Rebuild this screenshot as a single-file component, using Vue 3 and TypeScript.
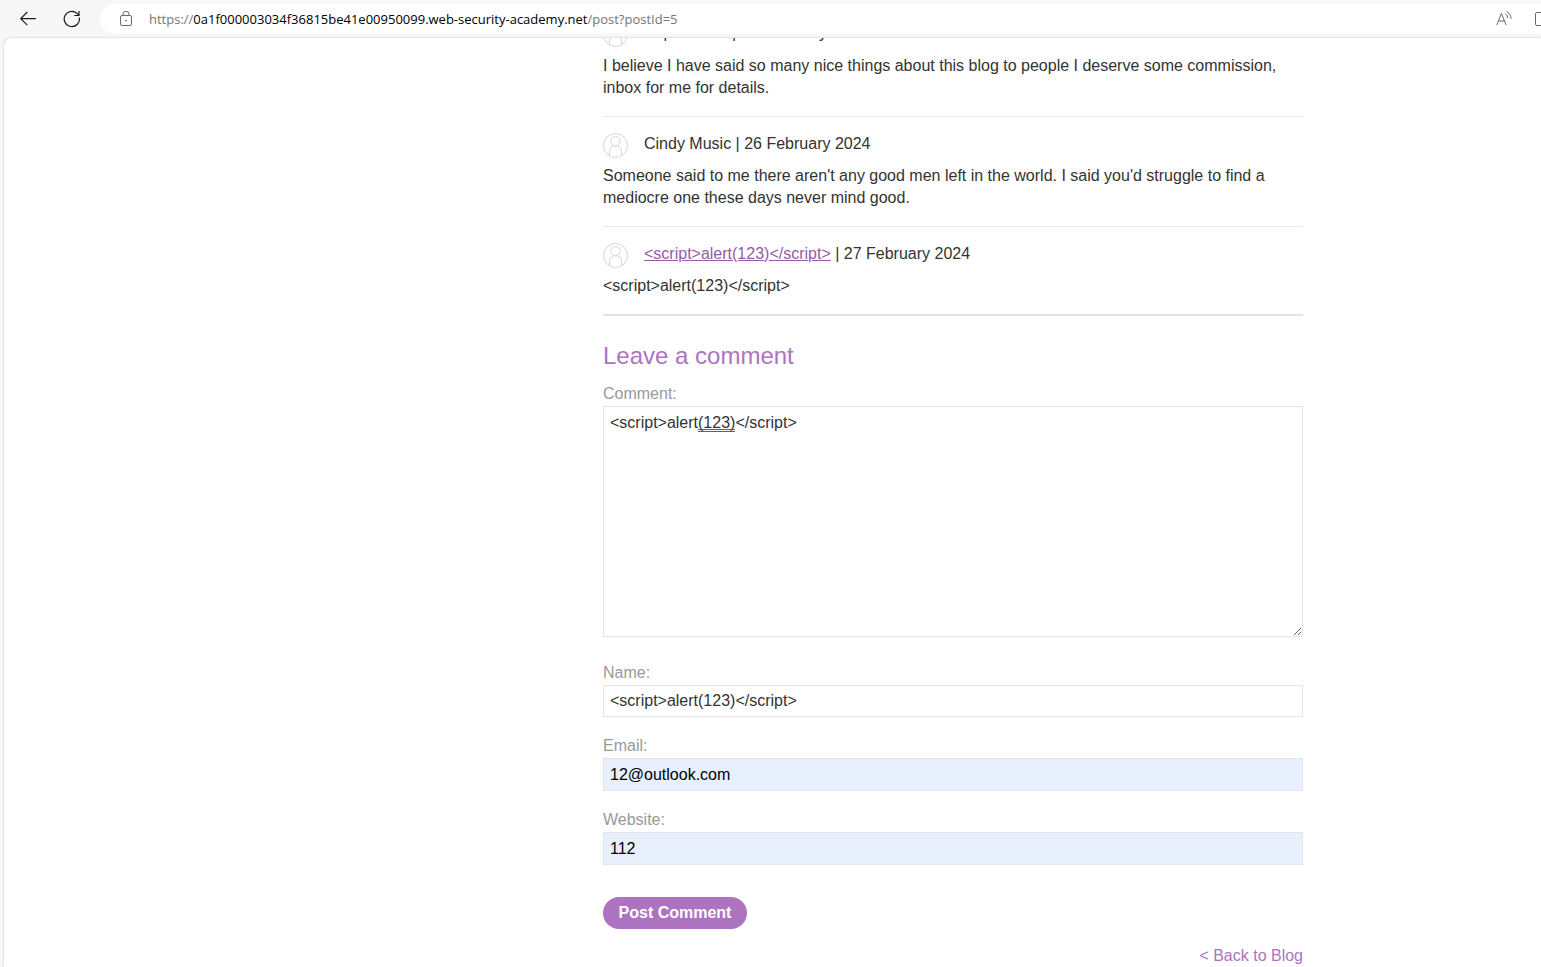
<script setup lang="ts">
import { ref } from 'vue'

interface Comment {
  author: string
  date: string
  body: string
  website?: string
}

const comments: Comment[] = [
  {
    author: 'Sophie Mail',
    date: '25 February 2024',
    body: 'I believe I have said so many nice things about this blog to people I deserve some commission, inbox for me for details.',
  },
  {
    author: 'Cindy Music',
    date: '26 February 2024',
    body: "Someone said to me there aren't any good men left in the world. I said you'd struggle to find a mediocre one these days never mind good.",
  },
  {
    author: '<script>alert(123)<\/script>',
    date: '27 February 2024',
    body: '<script>alert(123)<\/script>',
    website: '#',
  },
]

const comment = ref('<script>alert(123)<\/script>')
const name = ref('<script>alert(123)<\/script>')
const email = ref('12@outlook.com')
const website = ref('112')
</script>

<template>
  <div class="browser">
    <header class="toolbar">
      <button class="tool back" type="button" aria-label="Back">
        <svg width="16" height="16" viewBox="0 0 16 16">
          <path d="M15.8 7.6H.8M7.3 1L.7 7.6l6.6 6.6" />
        </svg>
      </button>
      <button class="tool reload" type="button" aria-label="Refresh">
        <svg width="18" height="18" viewBox="0 0 18 18">
          <path d="M16.3 7.6A7.6 7.6 0 1 1 14.2 3.6L15.8 5.2M16 .9v4.6h-4.7" />
        </svg>
      </button>
      <div class="address">
        <svg class="lock" width="14" height="16" viewBox="0 0 14 16">
          <rect x="1.5" y="4.5" width="11" height="10" rx="1.5" />
          <path d="M4 4.5V3.2a3 3 0 0 1 6 0v1.3" />
          <circle cx="7" cy="9.5" r=".5" />
        </svg>
        <div class="url">https://<span class="host">0a1f000003034f36815be41e00950099.web-security-academy.net</span>/post?postId=5</div>
        <button class="tool aloud" type="button" aria-label="Read aloud">
          <svg width="16" height="16" viewBox="0 0 16 16">
            <path d="M.8 14L5.4 2.4l4.7 11.6M2.4 10h6.2M9.2 2.6a5 5 0 0 1 2.4 4.4M10.6 .6a8 8 0 0 1 4.4 7.2" />
          </svg>
        </button>
        <button class="tool split" type="button" aria-label="Split screen">
          <svg width="16" height="16" viewBox="0 0 16 16">
            <rect x=".5" y="1.5" width="15" height="13" rx="1.5" />
            <path d="M8 1.5v13" />
          </svg>
        </button>
      </div>
    </header>

    <main class="page">
      <div class="column">
        <section class="thread">
          <article v-for="item in comments" :key="item.date" class="comment">
            <p class="meta">
              <svg class="avatar" width="25" height="25" viewBox="0 0 25 25">
                <circle cx="12.5" cy="12.5" r="12" />
                <circle cx="12.5" cy="8.2" r="4.7" />
                <path d="M6.5 22.5v-4a6 6 0 0 1 12 0v4" />
              </svg>
              <span>
                <a v-if="item.website" :href="item.website">{{ item.author }}</a>
                <template v-else>{{ item.author }}</template>
                | {{ item.date }}
              </span>
            </p>
            <p class="body">{{ item.body }}</p>
          </article>
        </section>

        <form class="reply" @submit.prevent>
          <h2>Leave a comment</h2>
          <div class="field message">
            <label for="comment">Comment:</label>
            <div class="editor">
              <textarea id="comment" v-model="comment" spellcheck="false"></textarea>
              <span class="grammar-mark"></span>
            </div>
          </div>
          <div class="field">
            <label for="name">Name:</label>
            <input id="name" v-model="name" type="text" spellcheck="false" />
          </div>
          <div class="field">
            <label for="email">Email:</label>
            <input id="email" v-model="email" class="filled" type="email" />
          </div>
          <div class="field">
            <label for="website">Website:</label>
            <input id="website" v-model="website" class="filled" type="text" />
          </div>
          <button class="post" type="submit">Post Comment</button>
        </form>

        <nav class="back-link"><a href="#">&lt; Back to Blog</a></nav>
      </div>
    </main>
  </div>
</template>

<style>
body {
  margin: 0;
}
</style>

<style scoped>
* {
  box-sizing: border-box;
}

.browser {
  display: flex;
  flex-direction: column;
  height: 100vh;
  overflow: hidden;
  background: #f7f7f7;
  font-family: "Liberation Sans", Arial, sans-serif;
  font-size: 16px;
  line-height: 22px;
  color: #333332;
}

.toolbar {
  display: flex;
  align-items: center;
  flex: none;
  height: 38px;
  padding-left: 16px;
}

.tool {
  display: flex;
  align-items: center;
  justify-content: center;
  flex: none;
  width: 24px;
  height: 24px;
  padding: 0;
  border: 0;
  background: none;
}

.tool svg {
  flex: none;
  fill: none;
  stroke: #1b1b1b;
  stroke-width: 1.2;
}

.reload {
  margin-left: 20px;
}

.address {
  display: flex;
  align-items: center;
  flex: 1;
  height: 30px;
  margin: 0 -14px 0 16px;
  padding-left: 19px;
  border-radius: 15px 0 0 15px;
  background: #fff;
}

.lock {
  flex: none;
  margin-right: 16px;
  fill: none;
  stroke: #6a6a6a;
}

.url {
  flex: 1;
  font-family: "Open Sans", "Noto Sans", sans-serif;
  font-size: 13px;
  color: #767676;
  white-space: nowrap;
}

.host {
  color: #000;
}

.address .tool svg {
  stroke: #6a6a6a;
  stroke-width: 1;
}

.split {
  margin-left: 15px;
}

.page {
  flex: 1;
  min-height: 0;
  margin-left: 4px;
  padding-left: 599px;
  overflow: hidden;
  border-radius: 8px 0 0 0;
  background: #fff;
  box-shadow: 0 0 2px #b8b8b8;
}

.column {
  max-width: 700px;
  margin-top: -32px;
}

.comment {
  padding: 16px 0 17px;
  border-bottom: 1px solid #e8edec;
}

.comment:last-child {
  border-bottom: 2px solid #e4e4e4;
}

.meta {
  display: flex;
  align-items: flex-start;
  gap: 16px;
  min-height: 32px;
  margin: 0;
}

.comment:first-child .meta {
  min-height: 33px;
}

.avatar {
  flex: none;
  fill: none;
  stroke: #d3d6d6;
}

.meta a {
  color: #955aa8;
}

.body {
  margin: 0;
}

h2 {
  margin: 0;
  padding: 24px 0 11px;
  font-size: 24px;
  font-weight: 400;
  line-height: 32px;
  color: #ad73c1;
}

.field {
  display: flex;
  flex-direction: column;
  gap: 1px;
  margin-bottom: 18px;
}

.message {
  margin-bottom: 25px;
}

label {
  color: #999;
}

.editor {
  position: relative;
  display: flex;
}

textarea,
input {
  width: 100%;
  height: 32px;
  margin: 0;
  padding: 4px 6px;
  border: 1px solid #e4e4e4;
  border-radius: 0;
  outline: 0;
  background: #fff;
  font: inherit;
  color: #333332;
}

textarea {
  height: 231px;
  padding-top: 5px;
  resize: vertical;
}

.filled {
  height: 33px;
  background: #e8effd;
  color: #000;
}

.grammar-mark {
  position: absolute;
  top: 23px;
  left: 95px;
  width: 37px;
  height: 3px;
  border: solid #3a5be0;
  border-width: 1px 0;
}

.post {
  display: block;
  min-width: 144px;
  height: 32px;
  margin-top: 32px;
  padding: 0 15px;
  border: 0;
  border-radius: 16px;
  background: #ad73c1;
  font: inherit;
  font-weight: 700;
  color: #fff;
}

.back-link {
  margin-top: 16px;
  text-align: right;
}

.back-link a {
  color: #ad73c1;
  text-decoration: none;
}
</style>
